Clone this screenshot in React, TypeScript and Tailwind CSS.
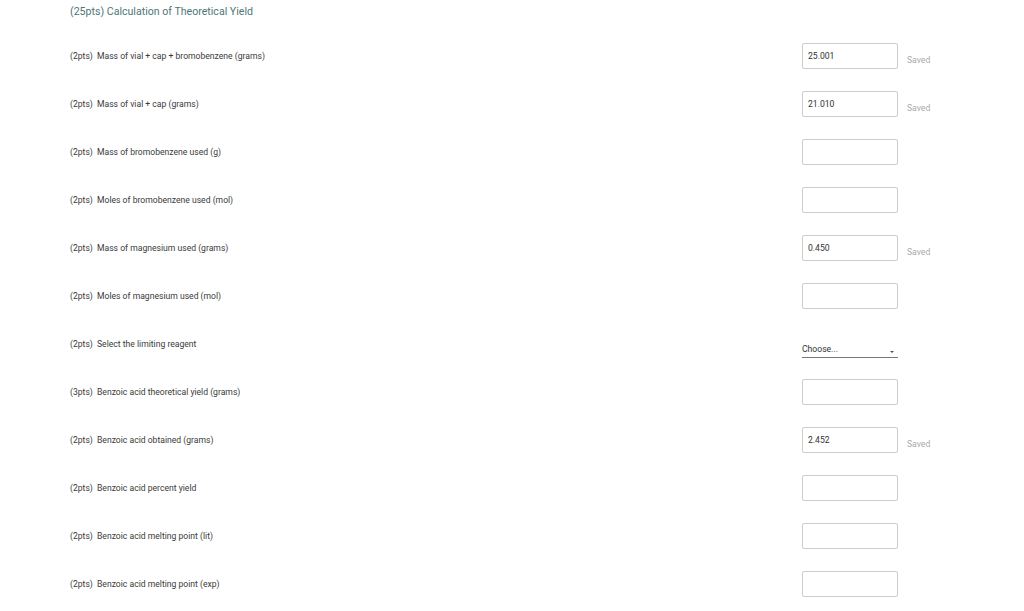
// Theoretical yield worksheet

type Row = { pts: number; label: string; value?: string; saved?: boolean; select?: boolean }

const rows: Row[] = [
  { pts: 2, label: 'Mass of vial + cap + bromobenzene (grams)', value: '25.001', saved: true },
  { pts: 2, label: 'Mass of vial + cap (grams)', value: '21.010', saved: true },
  { pts: 2, label: 'Mass of bromobenzene used (g)' },
  { pts: 2, label: 'Moles of bromobenzene used (mol)' },
  { pts: 2, label: 'Mass of magnesium used (grams)', value: '0.450', saved: true },
  { pts: 2, label: 'Moles of magnesium used (mol)' },
  { pts: 2, label: 'Select the limiting reagent', select: true },
  { pts: 3, label: 'Benzoic acid theoretical yield (grams)' },
  { pts: 2, label: 'Benzoic acid obtained (grams)', value: '2.452', saved: true },
  { pts: 2, label: 'Benzoic acid percent yield' },
  { pts: 2, label: 'Benzoic acid melting point (lit)' },
  { pts: 2, label: 'Benzoic acid melting point (exp)' },
]

export default function App() {
  return (
    <div className="w-[1024px] h-[611px] overflow-hidden bg-white pl-[70px] font-['Roboto','Liberation_Sans',sans-serif]">
      <h1 className="h-6 flex items-center text-[10.6px] text-[#4d7676] mb-2">(25pts) Calculation of Theoretical Yield</h1>

      {rows.map((r, i) => (
        <div key={i} className="h-12 flex items-center">
          <div className="w-[732px] flex text-[8.6px] text-[#3a3a3a] mt-[1px]">
            <span className="w-[27px]">({r.pts}pts)</span>
            <span>{r.label}</span>
          </div>

          {r.select ? (
            <div className="w-[96px] h-[20px] mt-[8px] border-b border-[#777] flex items-end justify-between pb-[1px] text-[8.6px] text-[#333]">
              <span>Choose...</span>
              <span className="mr-[4px] mb-[3px] w-0 h-0 border-l-[2px] border-r-[2px] border-t-[2px] border-l-transparent border-r-transparent border-t-[#555]" />
            </div>
          ) : (
            <div className="w-[96px] h-[26px] border border-[#ccc] rounded-[2px] flex items-center pl-[5px] text-[8.6px] text-[#333]">
              {r.value}
            </div>
          )}

          {r.saved && <span className="ml-[9px] mt-[8px] text-[8.6px] text-[#aaa]">Saved</span>}
        </div>
      ))}
    </div>
  )
}
